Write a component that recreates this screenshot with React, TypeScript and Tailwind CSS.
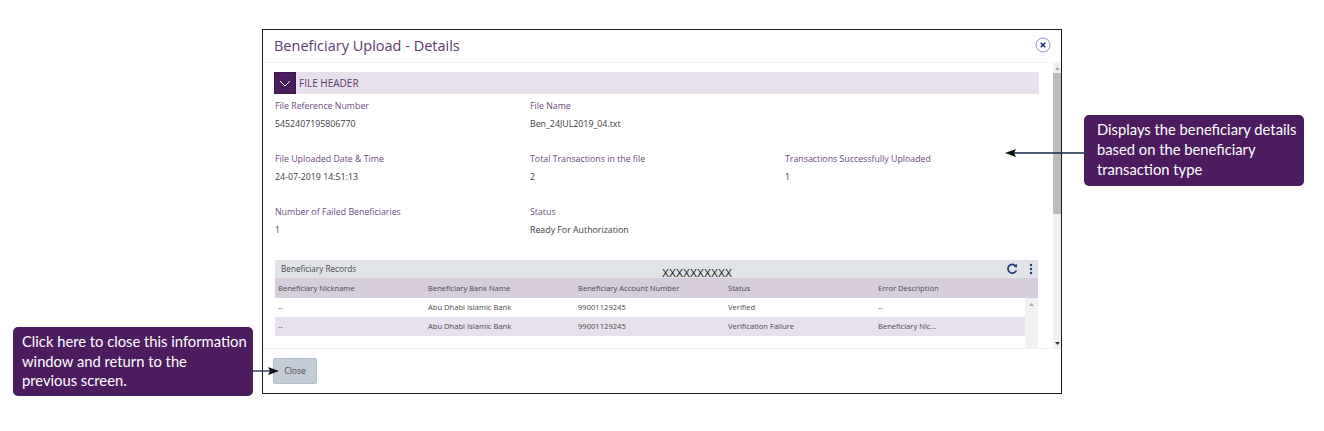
import React from "react";

function Field({ label, value }: { label: string; value: string }) {
  return (
    <div className="w-[255px] h-[53px] shrink-0">
      <div className="text-[8.8px] leading-[12px] text-[#6d4a80] pt-[3px]">{label}</div>
      <div className="text-[8.8px] leading-[12px] text-[#3c3c3c] mt-[6px]">{value}</div>
    </div>
  );
}

const cols = ["w-[150px]", "w-[150px]", "w-[150px]", "w-[150px]", "w-[146px]"];

function Row({ cells, shaded }: { cells: string[]; shaded?: boolean }) {
  return (
    <div className={`flex items-center h-[19px] pl-[3px] pt-[1px] text-[7.6px] text-[#4a4a4a] ${shaded ? "bg-[#e8e0ec]" : "bg-white"}`}>
      {cells.map((c, i) => (
        <div key={i} className={cols[i]}>{c}</div>
      ))}
    </div>
  );
}

function Callout({ className, children }: { className: string; children: React.ReactNode }) {
  return (
    <div className={`absolute bg-[#4b1d5e] rounded-[5px] text-white font-['Lato','Liberation_Sans',sans-serif] text-[14.75px] ${className}`}>
      {children}
    </div>
  );
}

export default function App() {
  return (
    <div className="relative w-[1324px] h-[431px] bg-white overflow-hidden pt-[29px] pl-[262px] font-['Open_Sans','Noto_Sans',sans-serif]">
      <div className="w-[800px] h-[365px] border border-[#1a1a1a] bg-white flex flex-col">
        <div className="h-[33px] shrink-0 flex items-center justify-between pl-[11px] pr-[11px] border-b border-[#f4f4f4]">
          <div className="text-[14.5px] text-[#5b3a6e]">Beneficiary Upload - Details</div>
          <svg width="16" height="16" viewBox="0 0 16 16" className="-mt-[3px] -mr-[1px]">
            <circle cx="8" cy="8" r="7" fill="white" stroke="#8a93c8" strokeWidth="1" />
            <path d="M5.7 5.7 10.3 10.3M10.3 5.7 5.7 10.3" stroke="#1c2a6e" strokeWidth="1.5" />
          </svg>
        </div>

        <div className="flex-1 min-h-0 flex">
          <div className="flex-1 min-w-0 pt-[9px] pl-[11px] overflow-hidden">
            <div className="w-[765px] h-[22px] flex items-center bg-[#e8e0ec]">
              <div className="w-[22px] h-[22px] bg-[#4b1d5e] border border-[#3a1a4c] flex items-center justify-center">
                <svg width="12" height="7" viewBox="0 0 12 7">
                  <path d="M1 1 6 6 11 1" fill="none" stroke="white" strokeWidth="1" />
                </svg>
              </div>
              <div className="ml-[3px] mt-[1px] text-[10px] text-[#5b3a6e]">FILE HEADER</div>
            </div>

            <div className="pl-[1px] pt-[3px] flex flex-wrap w-[770px]">
              <Field label="File Reference Number" value="5452407195806770" />
              <Field label="File Name" value="Ben_24JUL2019_04.txt" />
              <div className="w-[255px] h-[53px]" />
              <Field label="File Uploaded Date & Time" value="24-07-2019 14:51:13" />
              <Field label="Total Transactions in the file" value="2" />
              <Field label="Transactions Successfully Uploaded" value="1" />
              <Field label="Number of Failed Beneficiaries" value="1" />
              <Field label="Status" value="Ready For Authorization" />
            </div>

            <div className="w-[763px] ml-[1px] mt-[4px]">
              <div className="relative h-[18px] bg-[#e0e3e8] flex items-center justify-between pl-[6px] pr-[5px]">
                <div className="text-[8.2px] text-[#4a4a4a]">Beneficiary Records</div>
                <div className="flex items-center gap-[11px]">
                  <svg width="12" height="12" viewBox="0 0 12 12">
                    <path d="M10 3.2A4.4 4.4 0 1 0 10.4 7.5" fill="none" stroke="#1c3a78" strokeWidth="1.7" />
                    <path d="M7.6 3.7 11 4.4 10.8 0.8Z" fill="#1c3a78" />
                  </svg>
                  <svg width="4" height="12" viewBox="0 0 4 12">
                    <circle cx="2" cy="2" r="1.2" fill="#1c3a78" />
                    <circle cx="2" cy="6" r="1.2" fill="#1c3a78" />
                    <circle cx="2" cy="10" r="1.2" fill="#1c3a78" />
                  </svg>
                </div>
                <div className="absolute left-[387px] top-[7px] text-[10.5px] leading-[13px] text-[#222] font-['Liberation_Sans',sans-serif]">XXXXXXXXXX</div>
              </div>
              <div className="h-[20px] bg-[#d6ccdc] flex items-center pl-[3px] pt-[1px] text-[7.6px] text-[#4a4a4a]">
                {["Beneficiary Nickname", "Beneficiary Bank Name", "Beneficiary Account Number", "Status", "Error Description"].map((c, i) => (
                  <div key={i} className={cols[i]}>{c}</div>
                ))}
              </div>
              <div className="flex h-[50px]">
                <div className="w-[750px]">
                  <Row cells={["--", "Abu Dhabi Islamic Bank", "99001129245", "Verified", "--"]} />
                  <Row shaded cells={["--", "Abu Dhabi Islamic Bank", "99001129245", "Verification Failure", "Beneficiary Nic..."]} />
                </div>
                <div className="w-[13px] bg-[#f1f1f1] flex justify-center pt-[5px]">
                  <svg width="5" height="3" viewBox="0 0 5 3"><path d="M2.5 0 5 3H0Z" fill="#a8a8a8" /></svg>
                </div>
              </div>
            </div>
          </div>

          <div className="w-[8px] bg-[#f1f1f1] flex flex-col items-center shrink-0">
            <div className="h-[10px] flex items-center">
              <svg width="5" height="3" viewBox="0 0 5 3"><path d="M2.5 0 5 3H0Z" fill="#a8a8a8" /></svg>
            </div>
            <div className="w-full h-[141px] bg-[#bcbcbc]" />
            <div className="flex-1 flex items-end pb-[3px]">
              <svg width="5" height="3" viewBox="0 0 5 3"><path d="M0 0H5L2.5 3Z" fill="#333" /></svg>
            </div>
          </div>
        </div>

        <div className="h-[45px] shrink-0 border-t border-[#f0f0f0] pl-[10px] pt-[9px]">
          <button className="block w-[44px] h-[26px] bg-[#c3ccd6] border border-[#b4bec9] rounded-[2px] text-[8.5px] text-[#4a4a4a]">Close</button>
        </div>
      </div>

      <Callout className="left-[1084px] top-[115px] w-[220px] h-[71px] pl-[13px] pt-[4px] leading-[20px]">
        Displays the beneficiary details<br />based on the beneficiary<br />transaction type
      </Callout>
      <Callout className="left-[13px] top-[327px] w-[240px] h-[69px] pl-[9px] pt-[5px] leading-[19.5px]">
        Click here to close this information<br />window and return to the<br />previous screen.
      </Callout>

      <svg className="absolute left-[1004px] top-[147px]" width="82" height="12" viewBox="0 0 82 12">
        <path d="M10 6H80" stroke="#12294a" strokeWidth="1.3" />
        <path d="M1 6 12 2 10 6 12 10Z" fill="#111" />
      </svg>
      <svg className="absolute left-[252px] top-[365px]" width="28" height="12" viewBox="0 0 28 12">
        <path d="M1 6H18" stroke="#12294a" strokeWidth="1.3" />
        <path d="M27 6 16 2 18 6 16 10Z" fill="#111" />
      </svg>
    </div>
  );
}
